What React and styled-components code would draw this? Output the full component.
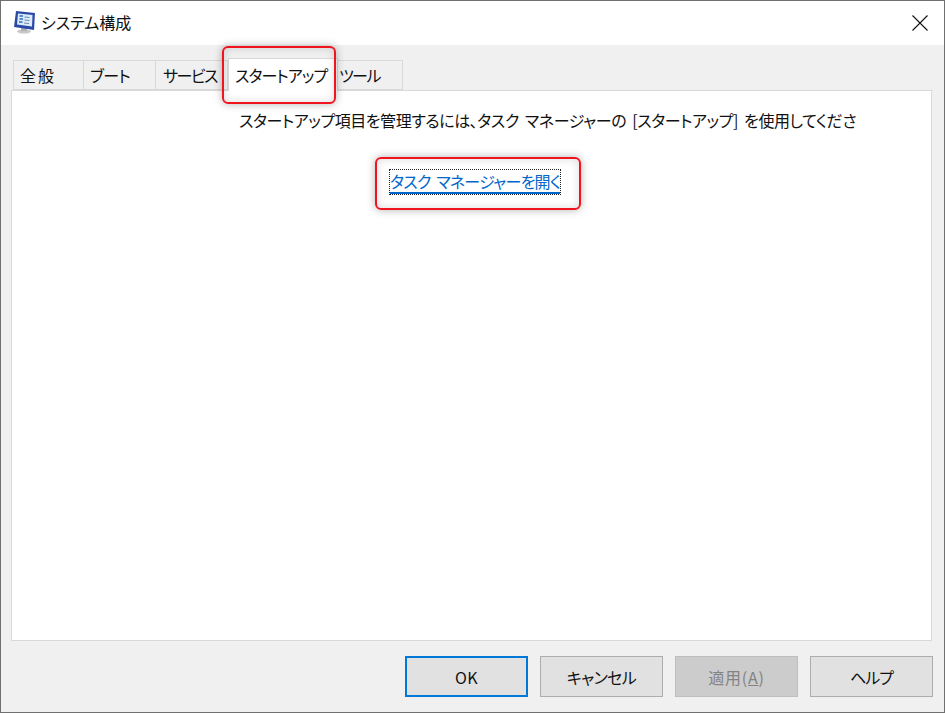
import React from 'react'
import styled, { createGlobalStyle } from 'styled-components'

const Global = createGlobalStyle`
  html, body, #root {
    margin: 0;
    padding: 0;
    width: 945px;
    height: 713px;
    overflow: hidden;
  }
  body {
    font-family: "Noto Sans CJK JP", "Noto Sans", sans-serif;
    font-feature-settings: "palt";
    font-size: 16px;
    color: #111;
  }
`

const Window = styled.div`
  box-sizing: border-box;
  width: 945px;
  height: 713px;
  position: relative;
  display: flex;
  flex-direction: column;
  background: #f0f0f0;
  border: 1px solid #707070;
`

const TitleBar = styled.div`
  height: 44px;
  flex: none;
  display: flex;
  align-items: center;
  padding: 0 16px 0 12px;
  background: #fff;
`

const TitleText = styled.span`
  margin: -2px 0 0 4px;
  flex: 1;
`

const IconSvg = styled.svg`
  margin-top: -2px;
`

const Body = styled.div`
  flex: 1;
  display: flex;
  flex-direction: column;
  padding: 15px 12px 15px 10px;
`

const Tabs = styled.div`
  height: 30px;
  flex: none;
  display: flex;
  align-items: flex-end;
  padding-left: 2px;
  position: relative;
  z-index: 1;
`

const Tab = styled.div`
  box-sizing: border-box;
  width: ${p => p.$w}px;
  height: ${p => (p.$active ? 33 : 30)}px;
  margin-bottom: ${p => (p.$active ? -1 : 0)}px;
  padding-left: ${p => p.$pad}px;
  background: ${p => (p.$active ? '#fff' : '#f0f0f0')};
  border: 1px solid #d9d9d9;
  border-bottom: ${p => (p.$active ? 'none' : '1px solid #d9d9d9')};
  border-left: ${p => (p.$first || p.$active ? '1px solid #d9d9d9' : 'none')};
  line-height: ${p => (p.$active ? 33 : 29)}px;
  letter-spacing: ${p => p.$ls || 0}px;
  white-space: nowrap;
`

const Panel = styled.div`
  box-sizing: border-box;
  flex: 1;
  background: #fff;
  border: 1px solid #d9d9d9;
  display: flex;
  flex-direction: column;
  align-items: flex-start;
  padding: 16px 0 0 227px;
`

const Message = styled.div`
  line-height: 26px;
  letter-spacing: -0.43px;
  word-spacing: 3px;
  white-space: nowrap;
`

const TaskLink = styled.a`
  margin: 37px 0 0 151px;
  box-sizing: border-box;
  height: 24px;
  color: #0066cc;
  line-height: 23px;
  letter-spacing: -0.75px;
  text-decoration: none;
  word-spacing: 3px;
  border-bottom: 2px solid #0066cc;
  outline: 1px dotted #222;
  white-space: nowrap;
`

const Footer = styled.div`
  flex: none;
  display: flex;
  justify-content: flex-end;
  gap: 12px;
  margin-top: 15px;
  margin-right: -1px;
`

const Button = styled.div`
  box-sizing: border-box;
  width: 123px;
  height: 41px;
  display: flex;
  align-items: center;
  justify-content: center;
  letter-spacing: ${p => p.$ls || 0}px;
  background: ${p => (p.$disabled ? '#cccccc' : '#e1e1e1')};
  color: ${p => (p.$disabled ? '#838383' : '#111')};
  border: ${p => (p.$primary ? '2px solid #0078d7' : p.$disabled ? '1px solid #bfbfbf' : '1px solid #adadad')};
`

const Underlined = styled.span`
  text-decoration: underline;
`

const Highlight = styled.div`
  position: absolute;
  box-sizing: border-box;
  left: ${p => p.$x}px;
  top: ${p => p.$y}px;
  width: ${p => p.$w}px;
  height: ${p => p.$h}px;
  border: 2px solid #f0141e;
  border-radius: 6px;
  box-shadow: 0 0 8px rgba(0, 0, 0, 0.3), inset 0 0 8px rgba(0, 0, 0, 0.15);
  z-index: 2;
`

const AppIcon = () => (
  <IconSvg width="24" height="24" viewBox="0 0 24 24">
    <ellipse cx="11" cy="21.5" rx="7" ry="2" fill="#c8c8c8" />
    <rect x="8" y="17" width="6" height="4" fill="#b0b0b0" />
    <path d="M3 1 L22 3 L21 20 L1 17 Z" fill="#2b4aa6" />
    <path d="M5 3.5 L19.5 5 L19 16.5 L4 14.5 Z" fill="#dcebfa" />
    <path d="M6.5 6 H10 M6.5 9 H10 M6 12 H9.5" stroke="#2c6fc0" strokeWidth="1.3" />
    <path d="M11.5 7 L16.5 7.5 M11.5 10 L16.5 10.5 M11 13 L16 13.5" stroke="#6f86ad" strokeWidth="1" />
  </IconSvg>
)

const CloseIcon = () => (
  <svg width="16" height="16" viewBox="0 0 16 16">
    <path d="M0.5 0.5 L15.5 15.5 M15.5 0.5 L0.5 15.5" stroke="#111" strokeWidth="1.1" fill="none" />
  </svg>
)

const App = () => (
  <Window>
    <Global />
    <TitleBar>
      <AppIcon />
      <TitleText>システム構成</TitleText>
      <CloseIcon />
    </TitleBar>
    <Body>
      <Tabs>
        <Tab $first $w={71} $pad={6} $ls={2}>全般</Tab>
        <Tab $w={72} $pad={6} $ls={-0.7}>ブート</Tab>
        <Tab $w={72} $pad={7} $ls={-1.5}>サービス</Tab>
        <Tab $active $w={110} $pad={6} $ls={-0.9}>スタートアップ</Tab>
        <Tab $w={65} $pad={1} $ls={-1.5}>ツール</Tab>
      </Tabs>
      <Panel>
        <Message>スタートアップ項目を管理するには、タスク マネージャーの [スタートアップ] を使用してくださ</Message>
        <TaskLink>タスク マネージャーを開く</TaskLink>
      </Panel>
      <Footer>
        <Button $primary $ls={0.5}>OK</Button>
        <Button $ls={-0.6}>キャンセル</Button>
        <Button $disabled $ls={0.8}>適用(<Underlined>A</Underlined>)</Button>
        <Button $ls={-1}>ヘルプ</Button>
      </Footer>
    </Body>
    <Highlight $x={221} $y={45} $w={114} $h={58} />
    <Highlight $x={374} $y={156} $w={206} $h={53} />
  </Window>
)

export default App
